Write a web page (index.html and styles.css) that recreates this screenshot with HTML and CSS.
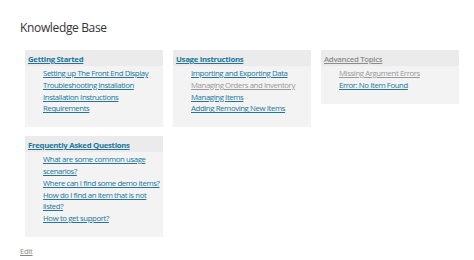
FILE: index.html
```html
<!DOCTYPE html>
<html>
<head>
<meta charset="utf-8">
<link rel="stylesheet" href="styles.css">
</head>
<body>
<div class="page">
  <h1 class="title">Knowledge Base</h1>
  <div class="grid">
    <div class="box">
      <div class="box-head"><a class="head-link" href="#">Getting Started</a></div>
      <ul class="items">
        <li><a href="#">Setting up The Front End Display</a></li>
        <li><a href="#">Troubleshooting Installation</a></li>
        <li><a href="#">Installation Instructions</a></li>
        <li><a href="#">Requirements</a></li>
      </ul>
    </div>
    <div class="box">
      <div class="box-head"><a class="head-link" href="#">Usage Instructions</a></div>
      <ul class="items">
        <li><a href="#">Importing and Exporting Data</a></li>
        <li><a class="muted" href="#">Managing Orders and Inventory</a></li>
        <li><a href="#">Managing Items</a></li>
        <li><a href="#">Adding Removing New Items</a></li>
      </ul>
    </div>
    <div class="box">
      <div class="box-head"><a class="head-link muted-head" href="#">Advanced Topics</a></div>
      <ul class="items">
        <li><a class="muted" href="#">Missing Argument Errors</a></li>
        <li><a href="#">Error: No Item Found</a></li>
      </ul>
    </div>
    <div class="box">
      <div class="box-head"><a class="head-link" href="#">Frequently Asked Questions</a></div>
      <ul class="items">
        <li><a href="#">What are some common usage scenarios?</a></li>
        <li><a href="#">Where can I find some demo items?</a></li>
        <li><a href="#">How do I find an item that is not listed?</a></li>
        <li><a href="#">How to get support?</a></li>
      </ul>
    </div>
  </div>
  <a class="edit" href="#">Edit</a>
</div>
</body>
</html>
```

FILE: styles.css
```css
html, body {
  margin: 0;
  padding: 0;
  background: #ffffff;
}
body {
  font-family: "Open Sans", "Liberation Sans", sans-serif;
  color: #333333;
}
.page {
  padding: 20px 0 0 20px;
}
.title {
  margin: 0 0 14px 0;
  font-size: 12px;
  font-weight: 400;
  line-height: 16px;
  letter-spacing: -0.35px;
  color: #333333;
}
.grid {
  display: grid;
  grid-template-columns: 138px 138px 138px;
  column-gap: 10px;
  row-gap: 9px;
  margin-left: 5px;
  align-items: start;
}
.box {
  background: #f3f3f3;
}
.box-head {
  background: #ebebeb;
  height: 14px;
  padding: 2px 3px 0 3px;
  line-height: 14px;
  font-size: 7.8px;
  letter-spacing: -0.3px;
}
.head-link {
  color: #21759b;
  font-weight: 700;
  text-decoration: underline;
}
.muted-head {
  color: #8c8c8c;
  font-weight: 600;
}
.items {
  list-style: none;
  margin: 0;
  padding: 2px 0 12px 18px;
  font-size: 7.8px;
  line-height: 11.8px;
  letter-spacing: -0.4px;
}
.items a {
  color: #21759b;
  text-decoration: underline;
}
.items a.muted {
  color: #999999;
}
.edit {
  display: inline-block;
  margin-top: 5px;
  font-size: 7.5px;
  line-height: 10px;
  letter-spacing: -0.2px;
  color: #888888;
  text-decoration: underline;
}
```
